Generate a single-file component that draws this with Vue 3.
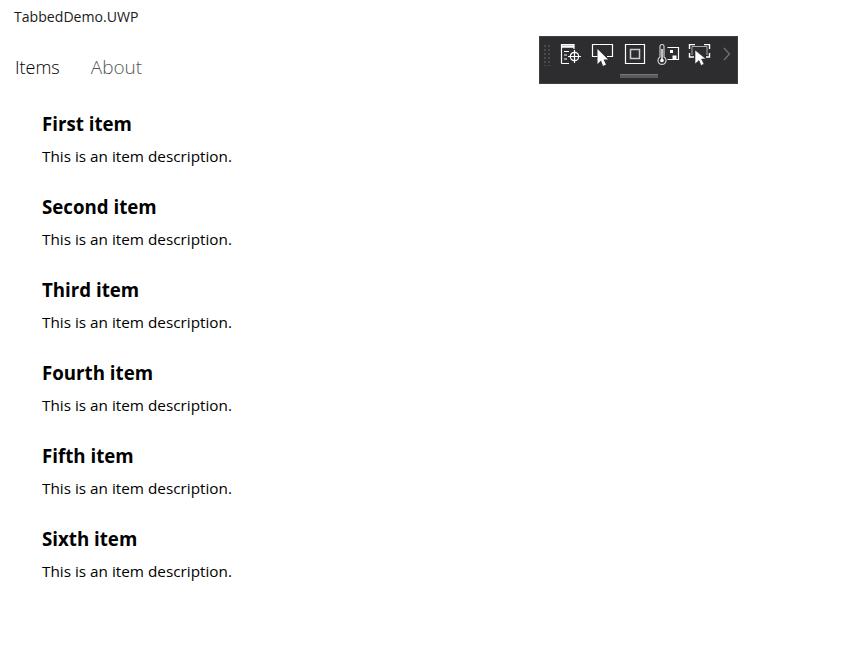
<template>
  <div class="page">
    <div class="app-title">TabbedDemo.UWP</div>

    <div class="tabs">
      <span class="tab active">Items</span>
      <span class="tab">About</span>
    </div>

    <div class="list">
      <div class="item" v-for="item in items" :key="item">
        <div class="item-title">{{ item }}</div>
        <div class="item-desc">This is an item description.</div>
      </div>
    </div>

    <!-- XAML debug toolbar, floats over the page -->
    <div class="debug-bar">
      <div class="grip"></div>
      <svg class="icons" width="180" height="30" viewBox="0 0 180 30" fill="none" stroke="#fff" stroke-width="1.2">
        <!-- live tree / target -->
        <path d="M4.500 19.500V0.500H17V5" />
        <path d="M4.500 2.500H17" stroke-width="2.500" />
        <path d="M4.500 19.500H12M7 7.500h5M7 11h3M7 15h3" />
        <circle cx="17.500" cy="12.500" r="4.200" />
        <path d="M17.500 6v13M11 12.500h13" />
        <!-- select element -->
        <path d="M40.500 12.500H35.500V0.500H55.500V12.500H50" />
        <path d="M40.500 5L51 15.500H46.500L49 20.500L46 22L44 16.500L40.500 20Z" fill="#fff" stroke="none" />
        <!-- layout adorners -->
        <path d="M68.500 0.500H87.500V19.500H68.500Z" />
        <path d="M73.500 5.500H82.500V14.500H73.500Z" stroke="#ccc" stroke-width="1.500" />
        <!-- track focused / thermometer -->
        <path d="M103 13V2.500a2 2 0 0 1 4 0V13a4 4 0 1 1-4 0Z" stroke="#ccc" />
        <path d="M105 5V16" stroke-width="1.400" />
        <circle cx="105" cy="16.500" r="1.800" fill="#fff" stroke="none" />
        <path d="M110.500 3.500H121.500V15.500H110.500" />
        <rect x="113" y="6" width="3" height="3" fill="#fff" stroke="none" />
        <rect x="115.500" y="11.500" width="4" height="3.500" fill="#fff" stroke="none" />
        <!-- display layout bounds -->
        <path d="M132.500 5V0.500H138M147 0.500H152.500V5M132.500 9V13H137M152.500 9V13H149" stroke-width="1.400" />
        <path d="M135 2.500H150M135 2.500V11M150 2.500V11" stroke="#aaa" stroke-width="1" />
        <path d="M138 6L149 15H144.500L147 20L144 21.500L142 16.500L138 20Z" fill="#fff" stroke="#2d2d30" stroke-width=".6" />
        <!-- overflow chevron -->
        <path d="M167 4L172.500 10L167 16" stroke="#6f6f72" stroke-width="1.400" />
      </svg>
      <div class="handle"></div>
    </div>
  </div>
</template>

<script setup>
const items = ["First item", "Second item", "Third item", "Fourth item", "Fifth item", "Sixth item"];
</script>

<style>
html,
body {
  margin: 0;
  background: #fff;
}
</style>

<style scoped>
.page {
  position: relative;
  width: 851px;
  height: 670px;
  overflow: hidden;
  background: #fff;
  color: #000;
  font-family: "Open Sans", "Noto Sans", "Liberation Sans", sans-serif;
}

.app-title {
  padding: 8px 0 0 14px;
  height: 24px;
  line-height: 18px;
  font-size: 14.100px;
  color: #1a1a1a;
}

.tabs {
  display: flex;
  align-items: baseline;
  gap: 31px;
  padding: 22px 0 0 15px;
  height: 38px;
}
.tab {
  font-size: 19px;
  font-weight: 300;
  line-height: 27px;
  color: #555;
}
.tab.active {
  font-size: 18px;
  color: #000;
}

.list {
  padding: 20px 0 0 42px;
}
.item {
  height: 83px;
}
.item-title {
  font-size: 18.700px;
  font-weight: 700;
  line-height: 24px;
}
.item-desc {
  margin-top: 10px;
  font-size: 15.300px;
  line-height: 20px;
}

.debug-bar {
  position: absolute;
  left: 539px;
  top: 36px;
  width: 197px;
  height: 46px;
  background: #2d2d30;
  border: 1px solid #3f3f46;
}
.grip {
  position: absolute;
  left: 3px;
  top: 7px;
  width: 8px;
  height: 22px;
  background-image: radial-gradient(#4a4a4e 1px, transparent 1px);
  background-size: 4px 4px;
}
.icons {
  position: absolute;
  left: 17px;
  top: 7px;
}
.handle {
  position: absolute;
  left: 80px;
  top: 37px;
  width: 38px;
  height: 3px;
  background: #5a5a5d;
  border-top: 1px solid #77777a;
}
</style>
